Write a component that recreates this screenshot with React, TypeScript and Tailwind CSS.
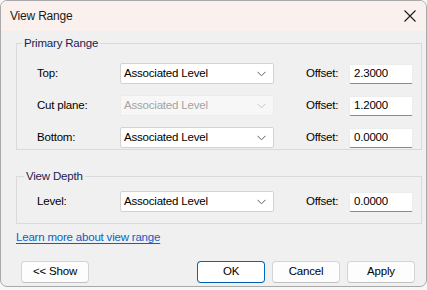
import React from "react";

const font = { fontFamily: '"Liberation Sans", Arial, sans-serif' };

function Chevron({ disabled }: { disabled?: boolean }) {
  return (
    <svg width="9" height="6" viewBox="0 0 9 6" className="shrink-0">
      <path d="M0.5 0.8 L4.5 4.8 L8.5 0.8" fill="none" stroke={disabled ? "#c4c4c4" : "#5f5f5f"} strokeWidth="1" />
    </svg>
  );
}

function Combo({ disabled }: { disabled?: boolean }) {
  return (
    <div
      className={
        "w-[154px] h-[21px] flex items-center justify-between pl-[3px] pr-[7px] border rounded-[2px] " +
        (disabled ? "bg-[#f7f7f7] border-[#ececec] text-[#a3a3a3]" : "bg-white border-[#d3d3d3] text-black")
      }
    >
      <span>Associated Level</span>
      <Chevron disabled={disabled} />
    </div>
  );
}

function OffsetBox({ value }: { value: string }) {
  return (
    <div className="w-[64px] h-[20px] flex items-center pl-[4px] bg-white border border-[#ececec] border-b-[#8a8a8a] rounded-[2px] text-black">
      {value}
    </div>
  );
}

function Row({ label, value, disabled }: { label: string; value: string; disabled?: boolean }) {
  return (
    <div className="flex items-center h-[21px]">
      <div className="w-[83px] text-black">{label}</div>
      <Combo disabled={disabled} />
      <div className="ml-[32px] w-[43px] text-black">Offset:</div>
      <OffsetBox value={value} />
    </div>
  );
}

function Button({ children, primary }: { children: React.ReactNode; primary?: boolean }) {
  return (
    <div
      className={
        "w-[68px] h-[22px] flex items-center justify-center rounded-[4px] border text-black " +
        (primary ? "bg-white border-[#0067c0] border-b-[#005ba8]" : "bg-[#fdfdfd] border-[#d4d4d4] border-b-[#c2c2c2]")
      }
    >
      {children}
    </div>
  );
}

export default function App() {
  return (
    <div className="w-[427px] h-[290px] bg-[#f7f7f7] text-[11.5px] tracking-[-0.2px] leading-none" style={font}>
      <div className="w-[427px] h-[287px] rounded-[7px] border border-[#a9a9a9] bg-[#f0f0f0] overflow-hidden flex flex-col">
        <div className="h-[30px] bg-[#faf1ee] flex items-center justify-between pl-[9px] pr-[10px] shrink-0">
          <span className="text-[12px] tracking-[-0.2px] text-[#1a1a1a]">View Range</span>
          <svg width="12" height="12" viewBox="0 0 12 12">
            <path d="M0.5 0.5 L11.5 11.5 M11.5 0.5 L0.5 11.5" stroke="#1a1a1a" strokeWidth="1.1" />
          </svg>
        </div>
        <div className="flex flex-col pl-[15px] pr-[4px]">
          <div className="relative mt-[12px] border border-[#dadada] pt-[19px] pl-[20px] pb-[1px] flex flex-col gap-[11px]">
            <span className="absolute -top-[6px] left-[5px] px-[2px] bg-[#f0f0f0] text-[#1c2251]">Primary Range</span>
            <Row label="Top:" value="2.3000" />
            <Row label="Cut plane:" value="1.2000" disabled />
            <Row label="Bottom:" value="0.0000" />
          </div>
          <div className="relative mt-[26px] border border-[#dadada] pt-[14px] pl-[20px] pb-[11px] flex flex-col">
            <span className="absolute -top-[6px] left-[7px] px-[2px] bg-[#f0f0f0] text-[#1c2251]">View Depth</span>
            <Row label="Level:" value="0.0000" />
          </div>
          <div className="mt-[8px] h-[12px]">
            <span className="text-[#0b61c4] underline underline-offset-[2px]">Learn more about view range</span>
          </div>
          <div className="mt-[17px] flex items-center pl-[5px] pr-[7px]">
            <Button>&lt;&lt; Show</Button>
            <div className="flex-1" />
            <div className="flex gap-[7px]">
              <Button primary>OK</Button>
              <Button>Cancel</Button>
              <Button>Apply</Button>
            </div>
          </div>
        </div>
      </div>
    </div>
  );
}
